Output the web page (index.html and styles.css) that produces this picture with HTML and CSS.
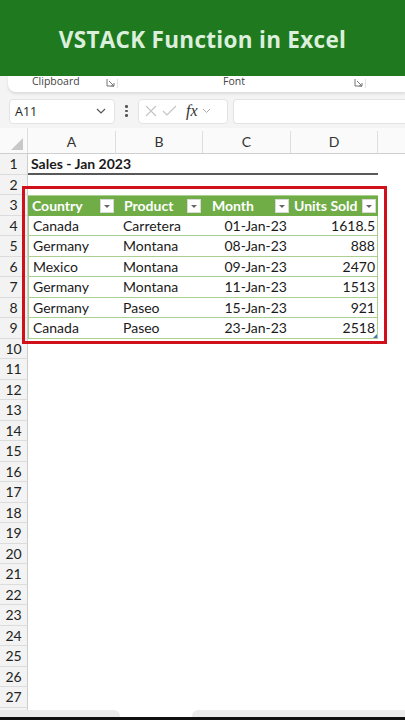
FILE: index.html
```html
<!DOCTYPE html>
<html>
<head>
<meta charset="utf-8">
<link rel="stylesheet" href="styles.css">
</head>
<body>
<div class="page">
  <header class="banner"><h1>VSTACK Function in Excel</h1></header>
  <div class="ribbon-wrap">
    <div class="ribbon">
      <span class="grp g1">Clipboard</span>
      <span class="launch l1"><svg width="9" height="9" viewBox="0 0 9 9"><path d="M1 1v7h7M3 3l5 5M5 8h3V5" fill="none" stroke="#777" stroke-width="1"/></svg></span>
      <span class="sep s1"></span>
      <span class="grp g2">Font</span>
      <span class="launch l2"><svg width="9" height="9" viewBox="0 0 9 9"><path d="M1 1v7h7M3 3l5 5M5 8h3V5" fill="none" stroke="#777" stroke-width="1"/></svg></span>
      <span class="sep s2"></span>
    </div>
  </div>
  <div class="fbar">
    <div class="namebox"><span>A11</span><svg width="10" height="6" viewBox="0 0 10 6"><path d="M1 1l4 4 4-4" fill="none" stroke="#555" stroke-width="1.2"/></svg></div>
    <div class="kebab"><i></i><i></i><i></i></div>
    <div class="fxbox">
      <svg width="14" height="14" viewBox="0 0 14 14"><path d="M2 2l10 10M12 2L2 12" stroke="#c4c4c4" stroke-width="1.1"/></svg>
      <svg width="16" height="14" viewBox="0 0 16 14"><path d="M2 7l4 4 9-9" fill="none" stroke="#c4c4c4" stroke-width="1.1"/></svg>
      <span class="fx">fx</span>
      <svg width="9" height="6" viewBox="0 0 9 6"><path d="M1 1l3.5 3.5L8 1" fill="none" stroke="#aaa" stroke-width="1"/></svg>
    </div>
    <div class="finput"></div>
  </div>
  <div class="colhdr">
    <div class="corner"><svg width="14" height="14" viewBox="0 0 14 14"><path d="M13 1v12H1z" fill="#c8c8c8"/></svg></div>
    <div class="ch">A</div><div class="ch">B</div><div class="ch">C</div><div class="ch">D</div><div class="ch last"></div>
  </div>
  <div class="sheet">
    <div class="grid">
      <div class="rh">1</div><div class="c title span4">Sales - Jan 2023</div><div class="c"></div>
      <div class="rh">2</div><div class="c span4"></div><div class="c"></div>

      <div class="rh">3</div>
      <div class="c th ca"><span>Country</span><b class="fb"></b></div>
      <div class="c th cb"><span>Product</span><b class="fb"></b></div>
      <div class="c th cc"><span>Month</span><b class="fb"></b></div>
      <div class="c th cd"><span>Units Sold</span><b class="fb"></b></div>
      <div class="c"></div>

      <div class="rh">4</div><div class="c td first">Canada</div><div class="c td cb">Carretera</div><div class="c td r">01-Jan-23</div><div class="c td r lastc">1618.5</div><div class="c"></div>
      <div class="rh">5</div><div class="c td first">Germany</div><div class="c td cb">Montana</div><div class="c td r">08-Jan-23</div><div class="c td r lastc">888</div><div class="c"></div>
      <div class="rh">6</div><div class="c td first">Mexico</div><div class="c td cb">Montana</div><div class="c td r">09-Jan-23</div><div class="c td r lastc">2470</div><div class="c"></div>
      <div class="rh">7</div><div class="c td first">Germany</div><div class="c td cb">Montana</div><div class="c td r">11-Jan-23</div><div class="c td r lastc">1513</div><div class="c"></div>
      <div class="rh">8</div><div class="c td first">Germany</div><div class="c td cb">Paseo</div><div class="c td r">15-Jan-23</div><div class="c td r lastc">921</div><div class="c"></div>
      <div class="rh">9</div><div class="c td first">Canada</div><div class="c td cb">Paseo</div><div class="c td r">23-Jan-23</div><div class="c td r lastc end">2518</div><div class="c"></div>

      <div class="rh">10</div><div class="c span5"></div>
      <div class="rh">11</div><div class="c span5"></div>
      <div class="rh">12</div><div class="c span5"></div>
      <div class="rh">13</div><div class="c span5"></div>
      <div class="rh">14</div><div class="c span5"></div>
      <div class="rh">15</div><div class="c span5"></div>
      <div class="rh">16</div><div class="c span5"></div>
      <div class="rh">17</div><div class="c span5"></div>
      <div class="rh">18</div><div class="c span5"></div>
      <div class="rh">19</div><div class="c span5"></div>
      <div class="rh">20</div><div class="c span5"></div>
      <div class="rh">21</div><div class="c span5"></div>
      <div class="rh">22</div><div class="c span5"></div>
      <div class="rh">23</div><div class="c span5"></div>
      <div class="rh">24</div><div class="c span5"></div>
      <div class="rh">25</div><div class="c span5"></div>
      <div class="rh">26</div><div class="c span5"></div>
      <div class="rh">27</div><div class="c span5"></div>
      <div class="rh"></div><div class="c span5"></div>
    </div>
    <div class="redbox"></div>
  </div>
  <div class="tabs">
    <div class="t1"></div><div class="t2"></div><div class="t3"></div>
  </div>
  <div class="blackbar"></div>
</div>
</body>
</html>
```

FILE: styles.css
```css
* { box-sizing: border-box; margin: 0; padding: 0; }
html, body { width: 405px; height: 720px; overflow: hidden; background: #f4f4f4; }
body { font-family: "Lato", "Open Sans", sans-serif; color: #1a1a1a; }
.page { width: 405px; height: 720px; display: flex; flex-direction: column; overflow: hidden; position: relative; }

.banner { height: 76px; background: #1f7a1f; display: flex; align-items: center; justify-content: center; flex: none; }
.banner h1 { color: #dcefdc; font-family: "Open Sans", sans-serif; font-weight: 700; font-size: 22.5px; letter-spacing: 0.3px; margin-top: 2px; }

.ribbon-wrap { height: 16px; padding-left: 8px; flex: none; background: #f4f4f4; }
.ribbon { position: relative; height: 16px; background: #fff; border-radius: 0 0 0 8px; box-shadow: 0 2px 3px rgba(0,0,0,0.10); }
.grp { position: absolute; top: 0; font-family: "Open Sans", sans-serif; font-size: 10.5px; color: #444; line-height: 11px; }
.g1 { left: 24px; }
.g2 { left: 215px; }
.launch { position: absolute; top: 2px; line-height: 0; }
.l1 { left: 98px; }
.l2 { left: 346px; }
.sep { position: absolute; top: 3px; width: 1px; height: 9px; background: #e2e2e2; }
.s1 { left: 109px; }
.s2 { left: 357px; }

.fbar { height: 36px; flex: none; display: flex; align-items: center; padding: 2px 0 0 9px; background: #f4f4f4; }
.namebox { width: 106px; height: 25px; background: #fff; border: 1px solid #e3e3e3; border-radius: 4px; display: flex; align-items: center; justify-content: space-between; padding: 0 8px 0 5px; font-family: "Open Sans", sans-serif; font-size: 12.5px; color: #222; }
.kebab { width: 23px; display: flex; flex-direction: column; align-items: center; gap: 2px; }
.kebab i { width: 2.5px; height: 2.5px; border-radius: 50%; background: #555; display: block; }
.fxbox { width: 90px; height: 25px; background: #fff; border: 1px solid #e3e3e3; border-radius: 4px; display: flex; align-items: center; padding-left: 5px; gap: 3px; }
.fx { font-family: "Liberation Serif", serif; font-style: italic; font-size: 16px; color: #333; margin-left: 6px; margin-right: 1px; }
.finput { flex: 1; height: 25px; margin-left: 5px; background: #fff; border: 1px solid #e3e3e3; border-right: none; border-radius: 4px 0 0 4px; }

.colhdr { height: 26px; flex: none; display: grid; grid-template-columns: 28px 88px 87px 88px 87px 1fr; background: #fafafa; border-bottom: 1px solid #cfcfcf; }
.corner { display: flex; align-items: flex-end; justify-content: flex-end; padding: 0 3px 2px 0; border-right: 1px solid #dedede; }
.ch { display: flex; align-items: center; justify-content: center; font-size: 14px; color: #333; border-right: 1px solid #dedede; margin: 3px 0 0; padding-bottom: 1px; }
.ch.last { border-right: none; }

.sheet { position: relative; flex: 1; background: #fff; overflow: hidden; }
.grid { display: grid; grid-template-columns: 28px 88px 87px 88px 87px 1fr; grid-auto-rows: 20.5px; }
.rh { background: #f3f3f3; border-right: 1px solid #cdcdcd; border-bottom: 1px solid #dcdcdc; display: flex; align-items: center; justify-content: center; font-size: 14px; color: #222; }
.c { display: flex; align-items: center; font-size: 14px; white-space: nowrap; padding: 0 3px; background: #fff; }
.span4 { grid-column: span 4; }
.span5 { grid-column: span 5; }
.title { font-weight: 700; border-bottom: 2.5px solid #595959; padding-top: 1px; }
.th { background: #70ad47; color: #fff; font-weight: 700; justify-content: space-between; padding: 0 2px 0 4px; border-top: 1px solid #a9d08e; }
.th.cb { padding-left: 8px; }
.th.cc { padding-left: 9px; }
.th.cd { padding-left: 3px; }
.fb { width: 14px; height: 14px; background: #fff; border: 1px solid #d9d9d9; display: block; position: relative; }
.fb::after { content: ""; position: absolute; left: 3px; top: 5px; border-left: 3.5px solid transparent; border-right: 3.5px solid transparent; border-top: 3.5px solid #666; }
.td { border-bottom: 1px solid #a9d08e; padding: 0 4px; }
.td.cb { padding-left: 7px; }
.td.first { border-left: 1px solid #a9d08e; }
.td.lastc { border-right: 1px solid #a9d08e; padding-right: 2px; }
.td.r { justify-content: flex-end; }
.td.end { position: relative; }
.td.end::after { content: ""; position: absolute; right: 0; bottom: 0; border-left: 4px solid transparent; border-bottom: 4px solid #4472c4; }

.redbox { position: absolute; left: 22px; top: 32px; width: 365px; height: 158px; border: 3px solid #d0101a; pointer-events: none; }

.tabs { position: absolute; left: 0; right: 0; top: 710px; height: 8px; display: flex; }
.t1 { width: 120px; background: #ececec; border-radius: 0 6px 0 0; }
.t2 { width: 72px; background: #fff; }
.t3 { flex: 1; background: #ececec; border-radius: 6px 0 0 0; }
.blackbar { position: absolute; left: 0; right: 0; top: 717px; height: 3px; background: #111; }
```
